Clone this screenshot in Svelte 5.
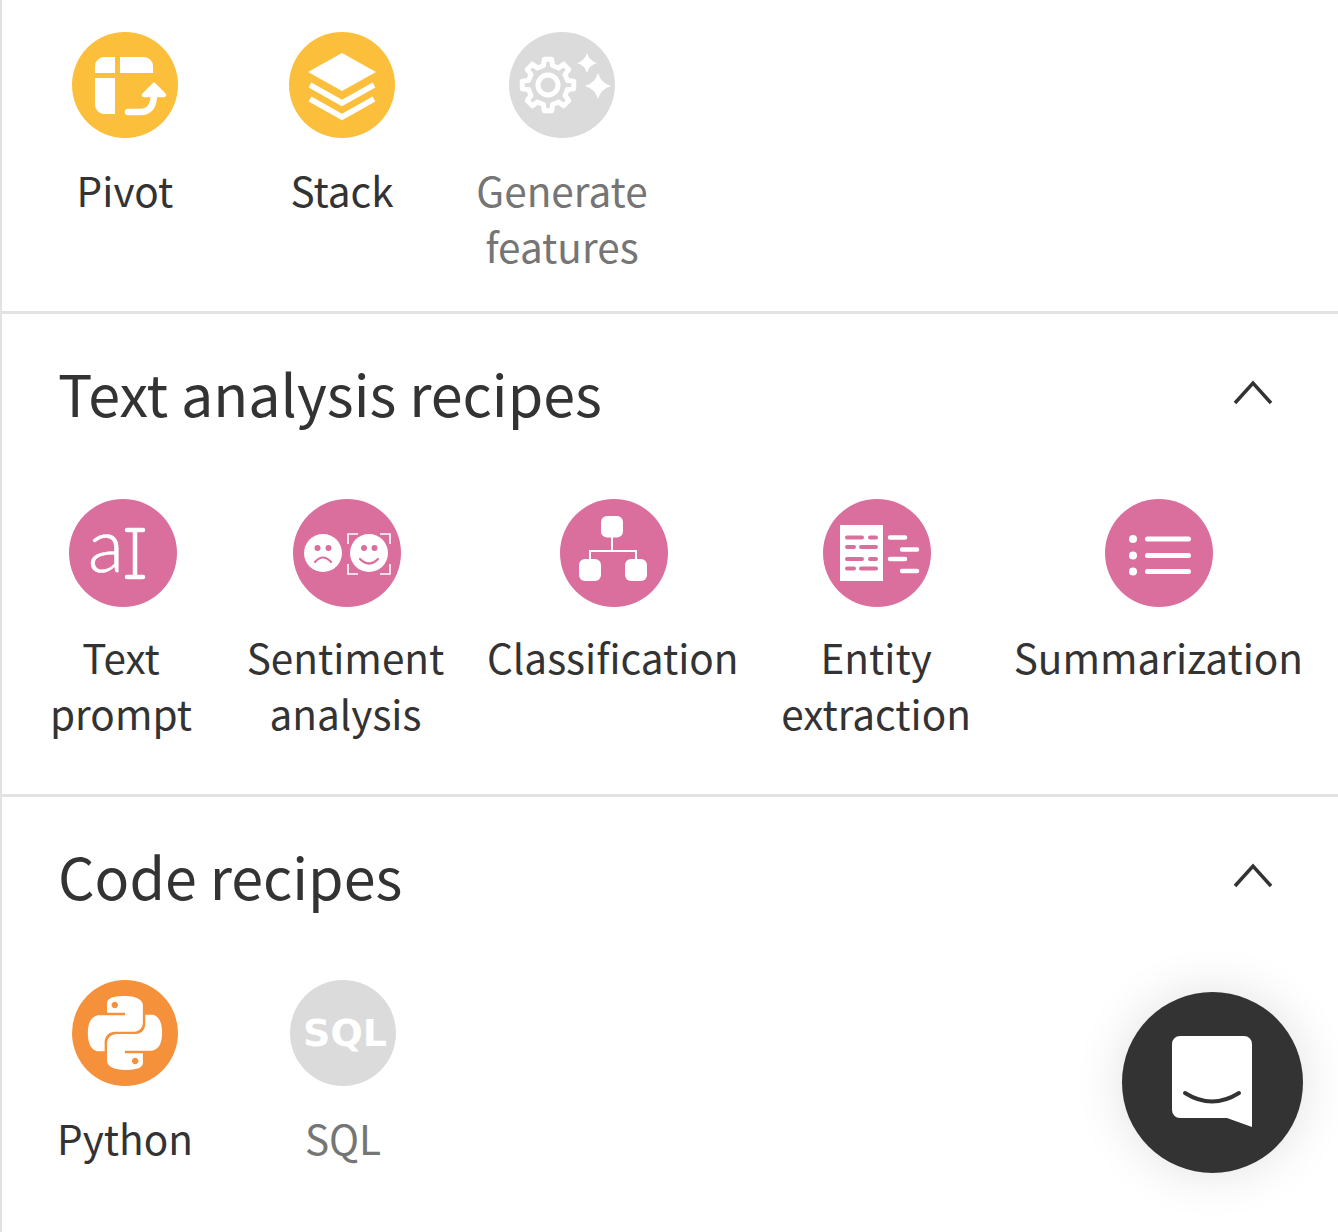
<script>
  function gearPath(cx, cy, R, r, n) {
    const pts = [];
    const step = (Math.PI * 2) / n;
    for (let i = 0; i < n; i++) {
      const a = -Math.PI / 2 + i * step;
      const w = step * 0.2;
      pts.push([a - w * 1.45, r], [a - w * 0.9, R], [a + w * 0.9, R], [a + w * 1.45, r]);
    }
    return (
      'M' +
      pts
        .map(([a, d]) => `${(cx + d * Math.cos(a)).toFixed(1)} ${(cy + d * Math.sin(a)).toFixed(1)}`)
        .join('L') +
      'Z'
    );
  }
  const gear = gearPath(548, 85, 26, 20, 8);
  const spark = (x, y, r) => {
    const k = r * 0.22;
    return `M${x} ${y - r}Q${x + k} ${y - k} ${x + r} ${y}Q${x + k} ${y + k} ${x} ${y + r}Q${x - k} ${y + k} ${x - r} ${y}Q${x - k} ${y - k} ${x} ${y - r}Z`;
  };
  const python =
    'M14.25.18l.9.2.73.26.59.3.45.32.34.34.25.34.16.33.1.3.04.26.02.2-.01.13V8.5l-.05.63-.13.55-.21.46-.26.38-.3.31-.33.25-.35.19-.35.14-.33.1-.3.07-.26.04-.21.02H8.77l-.69.05-.59.14-.5.22-.41.27-.33.32-.27.35-.2.36-.15.37-.1.35-.07.32-.04.27-.02.21v3.06H3.17l-.21-.03-.28-.07-.32-.12-.35-.18-.36-.26-.36-.36-.35-.46-.32-.59-.28-.73-.21-.88-.14-1.05-.05-1.23.06-1.22.16-1.04.24-.87.32-.71.36-.57.4-.44.42-.33.42-.24.4-.16.36-.1.32-.05.24-.01h.16l.06.01h8.16v-.83H6.18l-.01-2.75-.02-.37.05-.34.11-.31.17-.28.25-.26.31-.23.38-.2.44-.18.51-.15.58-.12.64-.1.71-.06.77-.04.84-.02 1.27.05zm-6.3 1.98l-.23.33-.08.41.08.41.23.34.33.22.41.09.41-.09.33-.22.23-.34.08-.41-.08-.41-.23-.33-.33-.22-.41-.09-.41.09zm13.09 3.95l.28.06.32.12.35.18.36.27.36.35.35.47.32.59.28.73.21.88.14 1.04.05 1.23-.06 1.23-.16 1.04-.24.86-.32.71-.36.57-.4.45-.42.33-.42.24-.4.16-.36.09-.32.05-.24.02-.16-.01h-8.22v.82h5.84l.01 2.76.02.36-.05.34-.11.31-.17.29-.25.25-.31.24-.38.2-.44.17-.51.15-.58.13-.64.09-.71.07-.77.04-.84.01-1.27-.04-1.07-.14-.9-.2-.73-.25-.59-.3-.45-.33-.34-.34-.25-.34-.16-.33-.1-.3-.04-.25-.02-.2.01-.13v-5.34l.05-.64.13-.54.21-.46.26-.38.3-.32.33-.24.35-.2.35-.14.33-.1.3-.06.26-.04.21-.02.13-.01h5.84l.69-.05.59-.14.5-.21.41-.28.33-.32.27-.35.2-.36.15-.36.1-.35.07-.32.04-.28.02-.21V6.07h2.09l.14.01zm-6.47 14.25l-.23.33-.08.41.08.41.23.33.33.23.41.08.41-.08.33-.23.23-.33.08-.41-.08-.41-.23-.33-.33-.23-.41-.08-.41.08z';
</script>

<div class="panel">
  <section class="first">
    <div class="row wide">
      <div class="item">
        <svg class="icon" viewBox="72 32 106 106">
          <circle cx="125" cy="85" r="53" fill="#fbbf3b" />
          <g fill="#fff">
            <path d="M115 57v16H95v-7a9 9 0 0 1 9-9zM120 57h24a9 9 0 0 1 9 9v7h-33zM95 78h20v36h-11a9 9 0 0 1-9-9z" />
          </g>
          <path d="M128 112h12q14 0 14-18" fill="none" stroke="#fff" stroke-width="6.500" stroke-linecap="round" />
          <path d="M154 85l10 10h-20z" fill="#fff" stroke="#fff" stroke-width="4.500" stroke-linejoin="round" />
        </svg>
        <span>Pivot</span>
      </div>
      <div class="item">
        <svg class="icon" viewBox="289 32 106 106">
          <circle cx="342" cy="85" r="53" fill="#fbbf3b" />
          <path d="M342 53l34 19-34 19-34-19z" fill="#fff" />
          <path d="M310 85l32 18 32-18M310 99l32 18 32-18" fill="none" stroke="#fff" stroke-width="5.500" />
        </svg>
        <span>Stack</span>
      </div>
      <div class="item off gen">
        <svg class="icon" viewBox="509 32 106 106">
          <circle cx="562" cy="85" r="53" fill="#dbdbdb" />
          <path d={gear} fill="none" stroke="#fff" stroke-width="5" stroke-linejoin="round" />
          <circle cx="548" cy="85" r="10" fill="none" stroke="#fff" stroke-width="5" />
          <path d={spark(587, 63, 10)} fill="#fff" />
          <path d={spark(598, 86, 13)} fill="#fff" />
        </svg>
        <span>Generate<br />features</span>
      </div>
    </div>
  </section>

  <section class="second">
    <header>
      <h2>Text analysis recipes</h2>
      <svg class="chev" viewBox="0 0 40 26"><path d="M2 24L20 4l18 20" /></svg>
    </header>
    <div class="row tight">
      <div class="item tp">
        <svg class="icon big" viewBox="69 499 108 108">
          <circle cx="123" cy="553" r="54" fill="#da6e9c" />
          <text x="88" y="572" class="glyph">a</text>
          <path d="M127 530h16M127 577h16M135 530v47" fill="none" stroke="#fff" stroke-width="4.500" stroke-linecap="round" />
        </svg>
        <span>Text<br />prompt</span>
      </div>
      <div class="item senti">
        <svg class="icon big" viewBox="293 499 108 108">
          <circle cx="347" cy="553" r="54" fill="#da6e9c" />
          <circle cx="323" cy="553" r="19" fill="#fff" />
          <circle cx="369" cy="553" r="19" fill="#fff" />
          <g fill="#da6e9c">
            <circle cx="317.500" cy="548" r="3" />
            <circle cx="328.500" cy="548" r="3" />
            <circle cx="364" cy="548" r="3" />
            <circle cx="374.500" cy="548" r="3" />
          </g>
          <g fill="none" stroke="#da6e9c" stroke-width="2.200" stroke-linecap="round">
            <path d="M315 562q8-9 16 0" />
            <path d="M360 559q9 9 18 0" />
          </g>
          <path d="M358 534h-10v10M380 534h10v10M358 574h-10v-10M380 574h10v-10" fill="none" stroke="#fff" stroke-width="1.600" />
        </svg>
        <span>Sentiment<br />analysis</span>
      </div>
      <div class="item">
        <svg class="icon big" viewBox="560 499 108 108">
          <circle cx="614" cy="553" r="54" fill="#da6e9c" />
          <g fill="#fff">
            <rect x="601" y="516" width="22" height="21.500" rx="6" />
            <rect x="579" y="559" width="22" height="22" rx="6" />
            <rect x="625" y="559" width="22" height="22" rx="6" />
          </g>
          <path d="M612 537v14M590 560v-9h46v9" fill="none" stroke="#fff" stroke-width="2" />
        </svg>
        <span>Classification</span>
      </div>
      <div class="item">
        <svg class="icon big" viewBox="823 499 108 108">
          <circle cx="877" cy="553" r="54" fill="#da6e9c" />
          <rect x="840" y="525" width="43" height="56" fill="#fff" />
          <g stroke="#da6e9c" stroke-width="4" stroke-linecap="round">
            <path d="M847 537.500h15M870 537.500h6M847 547h7M861 547h15M847 559h15M870 559h6M847 568.500h7M861 568.500h15" />
          </g>
          <g stroke="#fff" stroke-width="4.500" stroke-linecap="round">
            <path d="M890 537.500h15M902 549.500h15M890 559h15M902 571h15" />
          </g>
        </svg>
        <span>Entity<br />extraction</span>
      </div>
      <div class="item last">
        <svg class="icon big" viewBox="1104.500 499 108 108">
          <circle cx="1158.500" cy="553" r="54" fill="#da6e9c" />
          <g fill="#fff">
            <circle cx="1132.500" cy="539" r="4" />
            <circle cx="1132.500" cy="555.500" r="4" />
            <circle cx="1132.500" cy="571.500" r="4" />
          </g>
          <path d="M1147 539h41M1147 555.500h41M1147 571.500h41" stroke="#fff" stroke-width="5" stroke-linecap="round" />
        </svg>
        <span>Summarization</span>
      </div>
    </div>
  </section>

  <section class="third">
    <header>
      <h2>Code recipes</h2>
      <svg class="chev" viewBox="0 0 40 26"><path d="M2 24L20 4l18 20" /></svg>
    </header>
    <div class="row wide">
      <div class="item">
        <svg class="icon" viewBox="72 980 106 106">
          <circle cx="125" cy="1033" r="53" fill="#f6913b" />
          <path d={python} transform="translate(88 996) scale(3.08)" fill="#fff" />
        </svg>
        <span>Python</span>
      </div>
      <div class="item off sqlitem">
        <svg class="icon" viewBox="290 980 106 106">
          <circle cx="343" cy="1033" r="53" fill="#dbdbdb" />
          <text x="345" y="1046" class="sql" text-anchor="middle">SQL</text>
        </svg>
        <span>SQL</span>
      </div>
    </div>
  </section>

  <button class="fab" aria-label="Open chat">
    <svg viewBox="0 0 80 92" width="80" height="92">
      <path d="M8 0h64a8 8 0 0 1 8 8v83l-25-9H8a8 8 0 0 1-8-8V8a8 8 0 0 1 8-8z" fill="#fff" />
      <path d="M13 57q27 17 54 0" fill="none" stroke="#333" stroke-width="4" stroke-linecap="round" />
    </svg>
  </button>
</div>

<style>
  :global(body) {
    margin: 0;
    background: #fff;
  }
  .panel {
    position: relative;
    width: 1338px;
    height: 1232px;
    box-sizing: border-box;
    overflow: hidden;
    border-left: 2px solid #e2e2e2;
    font-family: "Noto Sans CJK SC", "Noto Sans", sans-serif;
    color: #333;
  }
  section {
    box-sizing: border-box;
    border-bottom: 3px solid #e2e2e2;
  }
  .first {
    height: 314px;
    padding-top: 32px;
  }
  .second {
    height: 483px;
    padding-top: 40px;
  }
  .third {
    border-bottom: 0;
    padding-top: 40px;
  }
  header {
    display: flex;
    align-items: center;
    justify-content: space-between;
    height: 76px;
    padding: 0 65px 0 56px;
  }
  h2 {
    margin: 0;
    font-size: 57.4px;
    font-weight: 400;
    line-height: 76px;
  }
  .chev {
    width: 40px;
    height: 26px;
    fill: none;
    stroke: #333;
    stroke-width: 3.5;
  }
  .row {
    display: flex;
    align-items: flex-start;
  }
  .wide {
    padding-left: 40px;
    gap: 51px;
  }
  .tight {
    padding-left: 36px;
    gap: 42.7px;
    margin-top: 69px;
  }
  .third .row {
    margin-top: 67px;
  }
  .item {
    display: flex;
    flex-direction: column;
    align-items: center;
    min-width: 166px;
    font-size: 40.5px;
    line-height: 56px;
    text-align: center;
    white-space: nowrap;
  }
  .item span {
    display: block;
    margin-top: 24px;
  }
  .tight .item span {
    margin-top: 22px;
  }
  .gen {
    min-width: 172px;
  }
  .sqlitem {
    margin-left: 1px;
  }
  .off {
    color: #757575;
  }
  .icon {
    display: block;
    width: 106px;
    height: 106px;
  }
  .icon.big {
    width: 108px;
    height: 108px;
    margin-left: 2px;
  }
  .tp .icon.big,
  .senti .icon.big {
    margin-left: 4px;
  }
  .last .icon.big {
    margin-left: 1px;
  }
  .glyph {
    font-family: Lato, sans-serif;
    font-size: 74px;
    font-weight: 300;
    fill: #fff;
    stroke: #fff;
    stroke-width: 0.7;
  }
  .sql {
    font-family: "DejaVu Sans", sans-serif;
    font-size: 38px;
    font-weight: 700;
    fill: #fff;
  }
  .fab {
    position: absolute;
    left: 1120px;
    top: 992px;
    width: 181px;
    height: 181px;
    padding: 44px 2px 0 0;
    border: 0;
    border-radius: 50%;
    background: #333;
    box-shadow: 0 0 50px rgba(0, 0, 0, 0.12);
    display: flex;
    justify-content: center;
    align-items: flex-start;
  }
</style>
